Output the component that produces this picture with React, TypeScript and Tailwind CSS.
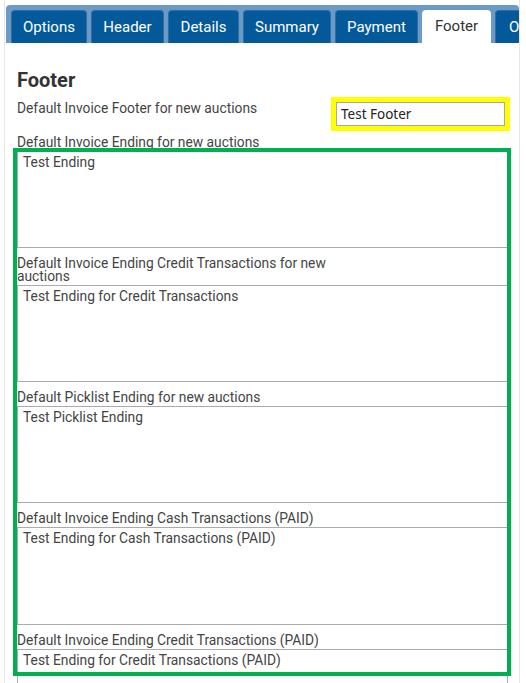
import React from "react";

// Tabs of the settings page; widths taken from the layout
const tabs = [
  { label: "Options", w: "w-[76px]" },
  { label: "Header", w: "w-[73px]" },
  { label: "Details", w: "w-[71px]" },
  { label: "Summary", w: "w-[88px]" },
  { label: "Payment", w: "w-[83px]" },
  { label: "Footer", w: "w-[69px]", active: true },
  { label: "Other", w: "w-[70px]", last: true },
];

const endings = [
  { label: "Default Invoice Ending Credit Transactions for new auctions", value: "Test Ending for Credit Transactions", h: "h-[97px]" },
  { label: "Default Picklist Ending for new auctions", value: "Test Picklist Ending", h: "h-[97px]" },
  { label: "Default Invoice Ending Cash Transactions (PAID)", value: "Test Ending for Cash Transactions (PAID)", h: "h-[98px]" },
  { label: "Default Invoice Ending Credit Transactions (PAID)", value: "Test Ending for Credit Transactions (PAID)", h: "h-[97px]" },
];

const TextBox = ({ value, h }: { value: string; h: string }) => (
  <textarea
    defaultValue={value}
    className={`block w-full ${h} shrink-0 resize-none border border-[#ababab] bg-white px-[5px] py-[2px] text-[13.8px] leading-[17px] text-[#444] outline-none`}
    style={{ fontFamily: "Roboto, 'Liberation Sans', sans-serif" }}
  />
);

export default function App() {
  return (
    <div
      className="relative h-[683px] w-[526px] overflow-hidden bg-white"
      style={{ fontFamily: "Roboto, 'Liberation Sans', sans-serif" }}
    >
      <div className="ml-[4px] min-h-full w-[516px] border-x border-[#e6e6e6]">
        {/* --- Tab bar --- */}
        <div className="ml-[1px] flex h-[43px] items-end overflow-hidden border-t-[5px] border-white">
          <div className="flex h-[38px] w-full items-end gap-[4px] overflow-hidden rounded-t-[4px] bg-[#6b9bc5] pl-[5px]">
            {tabs.map((t) => (
              <div
                key={t.label}
                className={`flex h-[33px] ${t.w} shrink-0 items-center rounded-t-[4px] text-[15px] ${
                  t.last ? "justify-start pl-[13px]" : "justify-center"
                } ${
                  t.active
                    ? "bg-white text-[#333]"
                    : "border-x border-t border-[#2f6ea5] bg-[#04599b] text-white"
                }`}
              >
                {t.label}
              </div>
            ))}
          </div>
        </div>

        {/* --- Footer settings --- */}
        <div className="flex flex-col pl-[12px] pr-[11px]">
          <h2 className="mt-[25px] text-[20px] font-bold leading-[24px] text-[#333]">Footer</h2>

          <div className="mt-[5px] flex items-start">
            <span className="mt-[3px] text-[13.8px] leading-[16px] text-[#444]">
              Default Invoice Footer for new auctions
            </span>
            <div className="ml-auto mr-[-2px] border-[5px] border-[#ffff00]">
              <input
                defaultValue="Test Footer"
                className="block h-[24px] w-[169px] border border-[#a8a8a8] bg-white px-[4px] text-[13.5px] text-[#222] outline-none"
                style={{ fontFamily: "'Noto Sans', 'Open Sans', sans-serif" }}
              />
            </div>
          </div>

          <label className="mb-[2px] mt-[5px] max-w-[340px] text-[13.8px] leading-[13px] text-[#444]">
            Default Invoice Ending for new auctions
          </label>
          <TextBox value="Test Ending" h="h-[97px]" />

          {endings.map((e) => (
            <React.Fragment key={e.label}>
              <label className="mb-[2px] mt-[9px] max-w-[340px] text-[13.8px] leading-[13px] text-[#444]">
                {e.label}
              </label>
              <TextBox value={e.value} h={e.h} />
            </React.Fragment>
          ))}
        </div>
      </div>

      {/* green highlight drawn over the ending fields */}
      <div className="pointer-events-none absolute left-[13px] top-[148px] h-[528px] w-[498px] border-[4px] border-[#00b050]" />
    </div>
  );
}
